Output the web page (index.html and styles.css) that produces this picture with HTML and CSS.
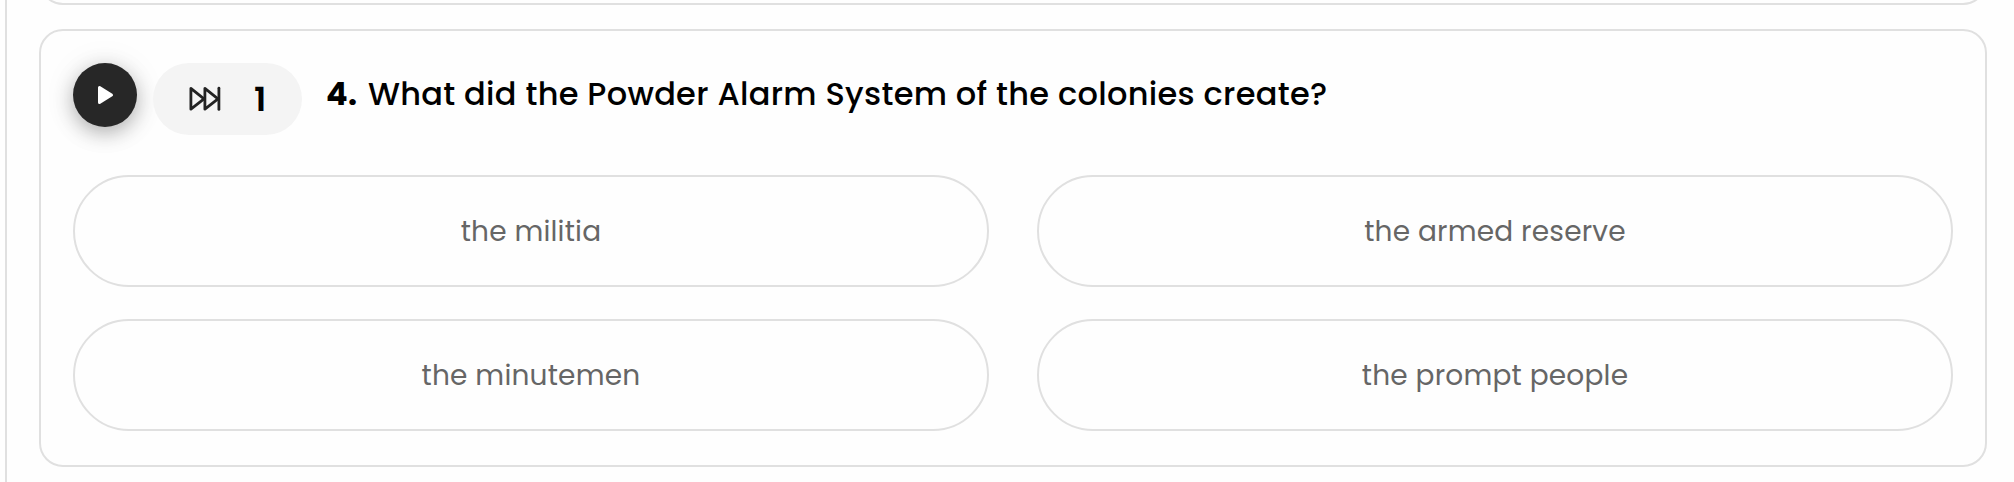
FILE: index.html
```html
<!DOCTYPE html>
<html lang="en">
<head>
    <meta charset="UTF-8">
    <meta name="viewport" content="width=device-width, initial-scale=1.0">
    <title>Quiz</title>
    <link rel="stylesheet" href="styles.css">
</head>
<body>
    <main class="quiz">
        <section class="question-card question-card-previous"></section>

        <section class="question-card">
            <div class="question-header">
                <button class="play-btn" aria-label="Play">
                    <svg width="64" height="64" viewBox="0 0 64 64">
                        <path d="M26.5 24.5 V39.5 L38.5 32 Z" fill="#fff" stroke="#fff" stroke-width="3" stroke-linejoin="round"/>
                    </svg>
                </button>
                <div class="skip-pill">
                    <svg width="32" height="26" viewBox="0 0 32 26" fill="none" stroke="#222" stroke-width="2.8" stroke-linecap="round" stroke-linejoin="round">
                        <path d="M1.9 2.4 V23.2 L15 12.8 Z"/>
                        <path d="M15.9 2.4 V23.2 L29 12.8 Z"/>
                        <path d="M29.9 2.2 V23.4"/>
                    </svg>
                    <span class="skip-count">1</span>
                </div>
                <h2 class="question-title"><span class="question-number">4.</span> What did the Powder Alarm System of the colonies create?</h2>
            </div>

            <div class="options">
                <button class="option">the militia</button>
                <button class="option">the armed reserve</button>
                <button class="option">the minutemen</button>
                <button class="option">the prompt people</button>
            </div>
        </section>
    </main>
</body>
</html>
```

FILE: styles.css
```css
* {
    margin: 0;
    padding: 0;
    box-sizing: border-box;
}

body {
    font-family: Poppins, Inter, sans-serif;
    background: #fefefe;
    color: #000;
    height: 100vh;
    overflow: hidden;
}

.quiz {
    display: flex;
    flex-direction: column;
    gap: 24px;
    height: 100vh;
    margin-left: 5px;
    padding: 0 27px 0 32px;
    border-left: 2px solid #e0e0e0;
}

.question-card {
    flex-shrink: 0;
    height: 438px;
    padding: 32px;
    border: 2px solid #e0e0e0;
    border-radius: 24px;
}

/* only the bottom edge of the previous question is in view */
.question-card-previous {
    height: 60px;
    padding: 0;
    margin-top: -55px;
}

.question-header {
    display: flex;
    align-items: flex-start;
    height: 112px;
}

button {
    border: none;
    background: none;
    font-family: inherit;
    cursor: pointer;
}

svg {
    display: block;
}

.play-btn {
    width: 64px;
    height: 64px;
    margin-right: 16px;
    border-radius: 50%;
    background: #272727;
    box-shadow: 0 2px 36px rgba(0,0,0,0.07), 0 6px 20px rgba(0,0,0,0.28);
}

.skip-pill {
    display: flex;
    align-items: center;
    width: 149px;
    height: 72px;
    padding-left: 36px;
    border-radius: 36px;
    background: #f4f4f4;
}

.skip-count {
    margin-left: 33px;
    font-size: 34px;
    font-weight: 600;
    line-height: 1;
}

.question-title {
    margin-left: 24px;
    padding-top: 7px;
    font-size: 32px;
    font-weight: 500;
    line-height: 48px;
    letter-spacing: 0.00938em;
    white-space: nowrap;
}

.question-number {
    margin-right: 2px;
    font-weight: 700;
}

.options {
    display: grid;
    grid-template-columns: 1fr 1fr;
    gap: 32px 48px;
}

.option {
    height: 112px;
    padding-top: 2px;
    border: 2px solid #e0e0e0;
    border-radius: 56px;
    color: #666;
    font-size: 28px;
    line-height: 42px;
    letter-spacing: 0.2px;
}
```
